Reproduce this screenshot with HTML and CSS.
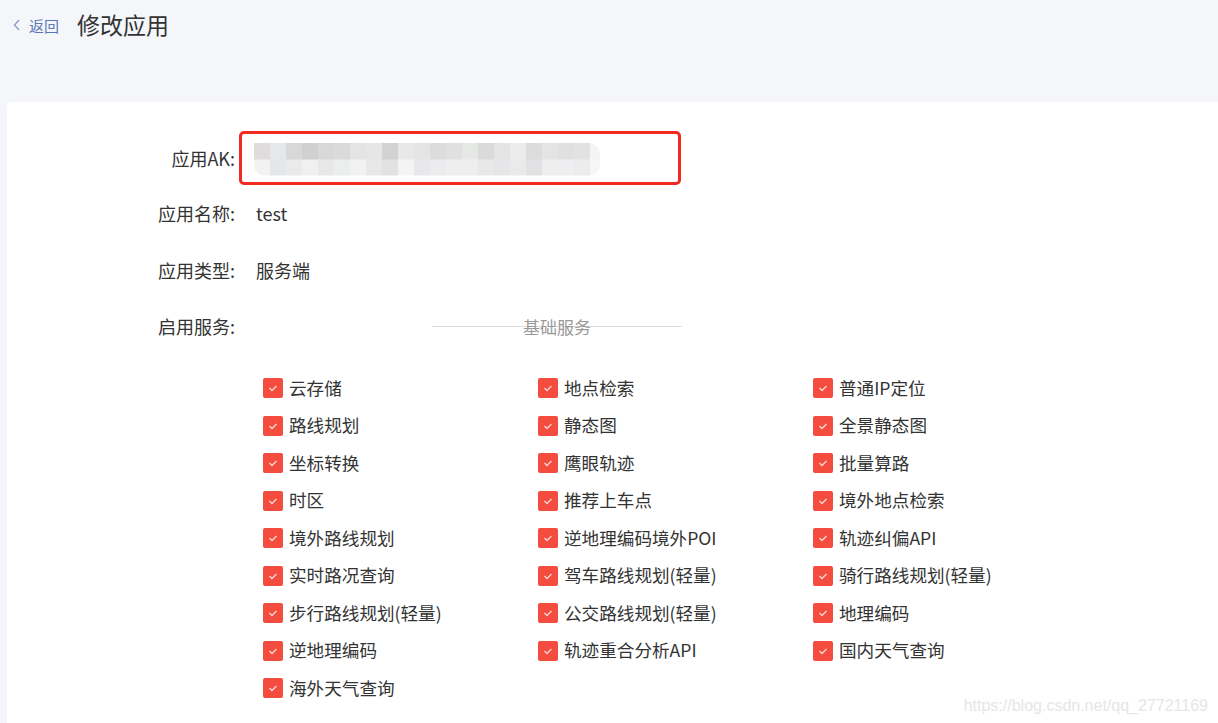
FILE: index.html
```html
<!DOCTYPE html>
<html lang="zh-CN">
<head>
  <meta charset="UTF-8">
  <title>修改应用</title>
  <link rel="stylesheet" href="styles.css">
</head>
<body>
  <div class="header">
    <a class="back">
      <svg width="10" height="14" viewBox="0 0 10 14"><path d="M7 2 L2.5 7 L7 12" fill="none" stroke="#8a9bc4" stroke-width="1.3"/></svg>
      <span>返回</span>
    </a>
    <h1>修改应用</h1>
  </div>

  <div class="card">
    <div class="row ak-row">
      <label>应用AK:</label>
      <div class="ak-box">
        <div class="blur"></div>
      </div>
    </div>
    <div class="row">
      <label>应用名称:</label>
      <span class="value">test</span>
    </div>
    <div class="row">
      <label>应用类型:</label>
      <span class="value">服务端</span>
    </div>
    <div class="row">
      <label>启用服务:</label>
      <div class="divider"><span>基础服务</span></div>
    </div>

    <div class="services" id="services"></div>

    <div class="watermark">https://blog.csdn.net/qq_27721169</div>
  </div>

  <script>
    // 服务列表
    const services = [
      "云存储", "地点检索", "普通IP定位",
      "路线规划", "静态图", "全景静态图",
      "坐标转换", "鹰眼轨迹", "批量算路",
      "时区", "推荐上车点", "境外地点检索",
      "境外路线规划", "逆地理编码境外POI", "轨迹纠偏API",
      "实时路况查询", "驾车路线规划(轻量)", "骑行路线规划(轻量)",
      "步行路线规划(轻量)", "公交路线规划(轻量)", "地理编码",
      "逆地理编码", "轨迹重合分析API", "国内天气查询",
      "海外天气查询"
    ];
    const box = document.getElementById("services");
    services.forEach(name => {
      const item = document.createElement("div");
      item.className = "service";
      item.innerHTML = '<span class="check"><svg width="12" height="10" viewBox="0 0 12 10"><path d="M2.5 5 L5 7.5 L9.5 3" fill="none" stroke="#ffd9d4" stroke-width="1.3"/></svg></span><span>' + name + '</span>';
      box.appendChild(item);
    });
  </script>
</body>
</html>
```

FILE: styles.css
```css
body {
  margin: 0;
  font-family: "Microsoft YaHei", "Noto Sans CJK SC", Arial, sans-serif;
  background: #f4f6fa;
  color: #333;
  height: 723px;
  overflow: hidden;
}
.header {
  display: flex;
  align-items: center;
  height: 48px;
  padding-left: 12px;
}
.back {
  display: flex;
  align-items: center;
  gap: 7px;
  font-size: 15px;
  color: #5a78b8;
  margin-right: 18px;
  margin-top: 2px;
}
.header h1 {
  margin: 0;
  font-size: 23px;
  font-weight: normal;
  color: #333;
}
.card {
  position: relative;
  margin: 54px 0 0 7px;
  background: #fff;
  border-radius: 4px 0 0 0;
  height: 621px;
  padding-top: 29px;
  box-sizing: border-box;
}
.row {
  display: flex;
  align-items: center;
  height: 56.5px;
  font-size: 18px;
}
.ak-row {
  height: 53px;
  margin-bottom: 1px;
}
.row label {
  width: 228px;
  text-align: right;
  box-sizing: border-box;
}
.value {
  margin-left: 21px;
}
.ak-box {
  margin-left: 4px;
  width: 442px;
  height: 54px;
  border: 3px solid #f22a1f;
  border-radius: 5px;
  box-sizing: border-box;
  display: flex;
  align-items: center;
  padding-left: 12px;
}
/* 打码的AK */
.blur {
  width: 346px;
  height: 33px;
  margin-top: 3px;
  border-radius: 0 12px 12px 12px;
  background:
    linear-gradient(to right,
      #e0dcdc 0 16px, #e4e8ea 16px 32px, #d8d8d8 32px 48px, #d0d0d0 48px 64px,
      #d8d8d8 64px 80px, #dadada 80px 96px, #e4e4e4 96px 112px, #e6e6e6 112px 128px,
      #d2d2d2 128px 144px, #e8e8e8 144px 160px, #e4e4e4 160px 176px, #dcdcdc 176px 192px,
      #e0e0e0 192px 208px, #e6e8e6 208px 224px, #dadada 224px 240px, #e4e4e4 240px 256px,
      #ececec 256px 272px, #dcdcdc 272px 288px, #e4e4e4 288px 304px, #e0e0e0 304px 320px,
      #e2e2e2 320px 336px, #f4f4f4 336px 346px) top / 100% 50% no-repeat,
    linear-gradient(to right,
      #f2f2f2 0 16px, #e4e6e8 16px 32px, #eaeaea 32px 48px, #f0f0f0 48px 64px,
      #e8e8e8 64px 80px, #eceeee 80px 96px, #f2f2f2 96px 112px, #e8e8e8 112px 128px,
      #e2e2e2 128px 144px, #f4f4f4 144px 160px, #e8e8ea 160px 176px, #ececee 176px 192px,
      #eeeeee 192px 208px, #eeeeee 208px 224px, #e8e8e8 224px 240px, #e6e6e8 240px 256px,
      #eaeaea 256px 272px, #e2e2e4 272px 288px, #eeeeee 288px 304px, #eeeef0 304px 320px,
      #ececec 320px 336px, #f6f6f6 336px 346px) bottom / 100% 50% no-repeat;
}
.divider {
  position: relative;
  margin-left: 197px;
  width: 250px;
  height: 20px;
  display: flex;
  justify-content: center;
  align-items: center;
}
.divider::before {
  content: '';
  position: absolute;
  left: 0;
  right: 0;
  top: 50%;
  height: 1px;
  background: #dcdcdc;
}
.divider span {
  position: relative;
  color: #999;
  font-size: 17px;
}
.services {
  display: grid;
  grid-template-columns: repeat(3, 275px);
  grid-auto-rows: 37.5px;
  padding-left: 256px;
  margin-top: 14px;
}
.service {
  display: flex;
  align-items: center;
  gap: 6px;
  font-size: 17.6px;
}
.check {
  width: 20px;
  height: 20px;
  border-radius: 2px;
  background: #f44d3f;
  display: flex;
  align-items: center;
  justify-content: center;
  margin-top: 2px;
}
.watermark {
  position: absolute;
  right: 10px;
  bottom: 8px;
  color: #e6e6e6;
  font-family: Arial, "Liberation Sans", sans-serif;
  font-size: 16px;
}
```
